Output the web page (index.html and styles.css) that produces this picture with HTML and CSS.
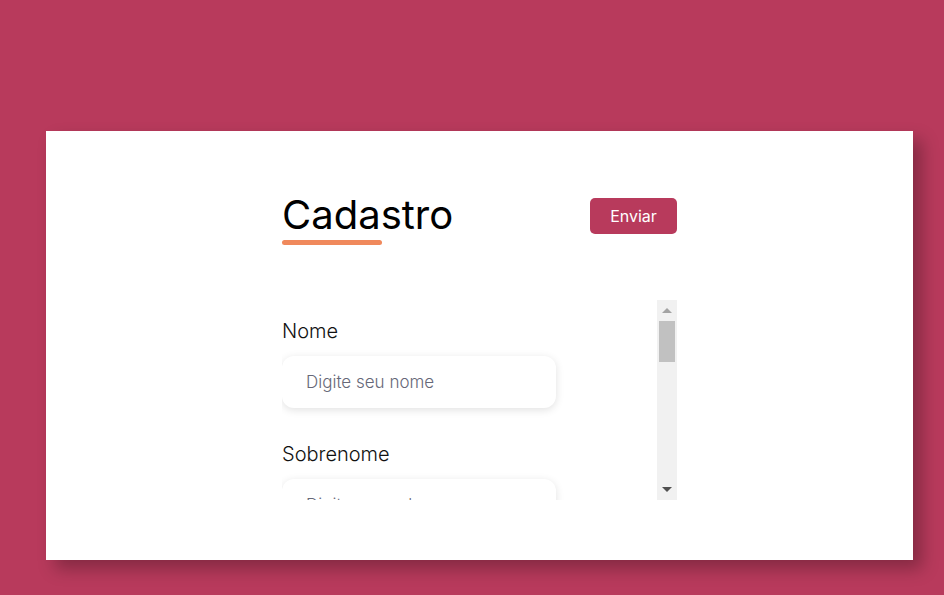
FILE: index.html
```html
<!DOCTYPE html>
<html lang="pt">
<head>
<meta charset="utf-8">
<title>Cadastro</title>
<link rel="stylesheet" href="styles.css">
</head>
<body>
<main class="card">
  <div class="column">
    <header class="head">
      <div class="title-block">
        <h1 class="title">Cadastro</h1>
        <div class="underline"></div>
      </div>
      <button class="send" type="button">Enviar</button>
    </header>
    <div class="scroller">
      <form class="form">
        <label class="field">
          <span class="label">Nome</span>
          <input class="input" type="text" placeholder="Digite seu nome">
        </label>
        <label class="field">
          <span class="label">Sobrenome</span>
          <input class="input" type="text" placeholder="Digite seu sobrenome">
        </label>
      </form>
      <div class="scrollbar">
        <div class="arrow up"></div>
        <div class="track"><div class="thumb"></div></div>
        <div class="arrow down"></div>
      </div>
    </div>
  </div>
</main>
</body>
</html>
```
FILE: styles.css
```css
* { box-sizing: border-box; }
html, body { margin: 0; }
body {
  background: #b83a5c;
  font-family: Inter, "Noto Sans", sans-serif;
  padding: 131px 0 0 46px;
  height: 595px;
  overflow: hidden;
}
.card {
  width: 867px;
  height: 429px;
  background: #fff;
  box-shadow: 9px 9px 16px rgba(0, 0, 0, 0.28);
  padding: 59px 0 0;
  display: flex;
  justify-content: center;
}
.column {
  width: 395px;
  display: flex;
  flex-direction: column;
}
.head {
  display: flex;
  justify-content: space-between;
  align-items: flex-start;
}
.title {
  margin: 0;
  font-size: 40px;
  font-weight: 400;
  line-height: 50px;
  color: #000;
}
.underline {
  width: 100px;
  height: 5px;
  border-radius: 3px;
  background: #f0895c;
}
.send {
  margin-top: 8px;
  width: 87px;
  height: 36px;
  border: 0;
  border-radius: 5px;
  background: #b83a5c;
  color: #fff;
  font-family: Inter, "Noto Sans", sans-serif;
  font-size: 16px;
  font-weight: 400;
  padding: 0;
}
.scroller {
  margin-top: 55px;
  height: 200px;
  display: flex;
}
.form {
  flex: 1;
  overflow: hidden;
  padding: 19px 0 0;
  display: flex;
  flex-direction: column;
  gap: 34px;
}
.field {
  display: flex;
  flex-direction: column;
  gap: 13px;
}
.label {
  font-size: 20px;
  font-weight: 300;
  line-height: 24px;
  color: #111;
}
.input {
  width: 274px;
  height: 52px;
  flex: none;
  border: 0;
  border-radius: 12px;
  background: #fff;
  box-shadow: 0 2px 8px rgba(0, 0, 0, 0.12);
  padding: 0 24px;
  font-family: Inter, "Noto Sans", sans-serif;
  font-size: 17px;
  font-weight: 300;
  color: #333;
  outline: none;
}
.input::placeholder { color: #666878; }
.scrollbar {
  width: 20px;
  background: #f1f1f1;
  display: flex;
  flex-direction: column;
  align-items: center;
}
.arrow {
  height: 17px;
  width: 20px;
  display: flex;
  align-items: center;
  justify-content: center;
  flex: none;
}
.arrow::before {
  content: "";
  width: 0;
  height: 0;
  border-left: 5px solid transparent;
  border-right: 5px solid transparent;
}
.up::before { border-bottom: 5px solid #a3a3a3; margin-top: 4px; }
.down::before { border-top: 5px solid #505050; margin-bottom: 4px; }
.track {
  flex: 1;
  width: 100%;
  padding: 4px 2px 0 2px;
}
.thumb {
  height: 41px;
  background: #c1c1c1;
}
```
